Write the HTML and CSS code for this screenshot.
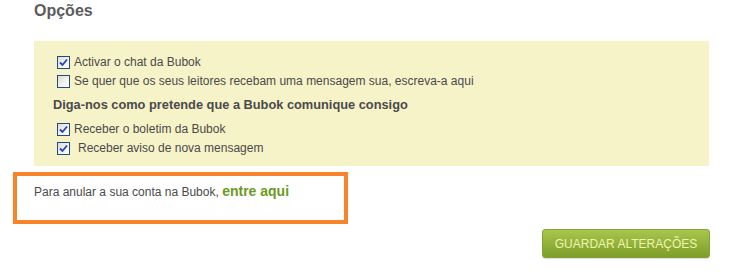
FILE: index.html
```html
<!DOCTYPE html>
<html lang="pt">
<head>
<meta charset="utf-8">
<title>Opções</title>
<link rel="stylesheet" href="styles.css">
</head>
<body>
<div class="page">
  <h2 class="title">Opções</h2>
  <div class="options">
    <div class="row"><span class="cb checked"><svg viewBox="0 0 9 9" width="9" height="9"><path d="M1 4.5 L3.5 7 L8 1.5" fill="none" stroke="#2a3fc0" stroke-width="1.8"/></svg></span><span>Activar o chat da Bubok</span></div>
    <div class="row"><span class="cb"></span><span>Se quer que os seus leitores recebam uma mensagem sua, escreva-a aqui</span></div>
    <div class="subhead">Diga-nos como pretende que a Bubok comunique consigo</div>
    <div class="row"><span class="cb checked"><svg viewBox="0 0 9 9" width="9" height="9"><path d="M1 4.5 L3.5 7 L8 1.5" fill="none" stroke="#2a3fc0" stroke-width="1.8"/></svg></span><span>Receber o boletim da Bubok</span></div>
    <div class="row"><span class="cb checked"><svg viewBox="0 0 9 9" width="9" height="9"><path d="M1 4.5 L3.5 7 L8 1.5" fill="none" stroke="#2a3fc0" stroke-width="1.8"/></svg></span><span class="gap">Receber aviso de nova mensagem</span></div>
  </div>
  <div class="cancel">Para anular a sua conta na Bubok, <a href="#" class="link">entre aqui</a></div>
  <div class="actions"><button class="save">GUARDAR ALTERAÇÕES</button></div>
</div>
</body>
</html>
```
FILE: styles.css
```css
html, body {
  margin: 0;
  padding: 0;
  background: #ffffff;
}
.page {
  font-family: "Liberation Sans", Arial, sans-serif;
  font-size: 12px;
  color: #4a4a4a;
  width: 736px;
  height: 276px;
  overflow: hidden;
}
.title {
  margin: 0 0 0 34px;
  padding-top: 1px;
  font-size: 16px;
  line-height: 20px;
  font-weight: bold;
  color: #5c5c5c;
  height: 40px;
}
.options {
  margin-left: 34px;
  width: 675px;
  height: 125px;
  box-sizing: border-box;
  background: #f6f3c9;
  padding: 15px 0 0 23px;
}
.row {
  display: flex;
  align-items: center;
  height: 13px;
  margin-bottom: 6px;
  line-height: 13px;
}
.row .gap {
  margin-left: 4px;
}
.cb {
  width: 11px;
  height: 11px;
  border: 1px solid #1e4f80;
  background: linear-gradient(135deg, #dcdcd6 0%, #f4f4f0 60%, #ffffff 100%);
  margin-right: 4px;
  display: flex;
  align-items: center;
  justify-content: center;
  flex: none;
}
.subhead {
  font-weight: bold;
  font-size: 12.8px;
  margin: 9px 0 11px -4px;
  line-height: 15px;
}
.cancel {
  margin: 6px 0 0 13px;
  width: 335px;
  height: 52px;
  box-sizing: border-box;
  border: 4px solid #f7832b;
  padding: 8px 0 0 17px;
  line-height: 15px;
}
.link {
  color: #6b9a1f;
  font-weight: bold;
  font-size: 14px;
  text-decoration: none;
}
.actions {
  display: flex;
  justify-content: flex-end;
  width: 710px;
  margin-top: 5px;
}
.save {
  width: 168px;
  height: 29px;
  border: 1px solid #86a23a;
  border-radius: 3px;
  background: linear-gradient(#a8c64c, #7d9e29);
  color: #f0f4b0;
  font-family: "Liberation Sans", Arial, sans-serif;
  font-size: 12px;
  padding: 0;
  box-shadow: 0 1px 1px rgba(0,0,0,0.15);
}
```
